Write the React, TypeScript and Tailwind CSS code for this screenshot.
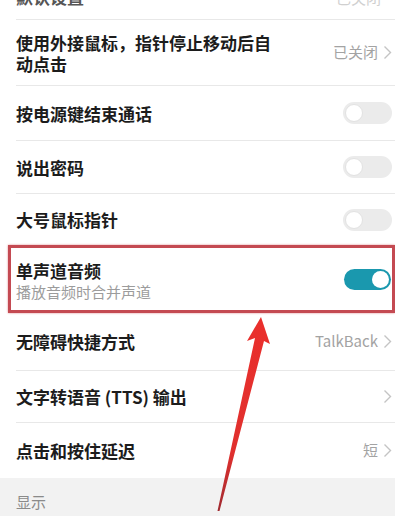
import * as React from "react";

const font = { fontFamily: '"Noto Sans CJK SC", "Noto Sans", sans-serif' };

function Chevron() {
  return (
    <svg width="9" height="15" viewBox="0 0 9 15" className="ml-[5px]">
      <polyline points="1.5,1.5 7.5,7.5 1.5,13.5" fill="none" stroke="#c4c4c4" strokeWidth="1.4" />
    </svg>
  );
}

function Toggle({ on }: { on?: boolean }) {
  if (on) {
    return (
      <div className="w-[47px] h-[21px] rounded-full bg-[#1a98ae] flex items-center justify-end pr-[2px]">
        <div className="w-[17px] h-[17px] rounded-full bg-white" />
      </div>
    );
  }
  return (
    <div className="w-[49px] h-[22px] rounded-full bg-[#ebebeb] flex items-center pl-[2px]">
      <div className="w-[18px] h-[18px] rounded-full bg-white border border-[#e2e2e2]" />
    </div>
  );
}

function Divider() {
  return <div className="h-px ml-4 bg-[#e8e8e8]" />;
}

function Row({ h, title, right }: { h: string; title: React.ReactNode; right?: React.ReactNode }) {
  return (
    <div className={`${h} flex items-center justify-between pl-4 pr-[3px]`}>
      <div className="text-[17px] leading-[21px] font-semibold text-[#1c1c1c]">{title}</div>
      {right}
    </div>
  );
}

function Value({ text }: { text?: string }) {
  return (
    <div className="flex items-center text-[15px] text-[#a3a3a3]">
      {text && <span>{text}</span>}
      <Chevron />
    </div>
  );
}

export default function App() {
  return (
    <div className="relative w-full h-[516px] overflow-hidden bg-white" style={font}>
      <div className="h-[19px] overflow-hidden flex items-end justify-between pl-4 pr-[14px]">
        <div className="text-[17px] leading-[21px] font-semibold text-[#555] mb-[12px]">默认设置</div>
        <div className="text-[15px] leading-[21px] text-[#d0d0d0] mb-[11px]">已关闭</div>
      </div>
      <Divider />
      <Row
        h="h-[65px]"
        title={<div className="w-[262px]">使用外接鼠标，指针停止移动后自动点击</div>}
        right={<Value text="已关闭" />}
      />
      <Divider />
      <Row h="h-[54px]" title="按电源键结束通话" right={<Toggle />} />
      <Divider />
      <Row h="h-[52px]" title="说出密码" right={<Toggle />} />
      <Divider />
      <Row h="h-[51px]" title="大号鼠标指针" right={<Toggle />} />
      <div className="h-[68px] ml-[8px] border-[3px] border-[#c44a52] shadow-[0_0_2px_#e08a90] flex items-center justify-between pl-[5px] pr-[1px]">
        <div className="pt-[4px]">
          <div className="text-[17px] leading-[21px] font-semibold text-[#1c1c1c]">单声道音频</div>
          <div className="text-[15px] leading-[21px] text-[#9c9c9c]">播放音频时合并声道</div>
        </div>
        <Toggle on />
      </div>
      <Row h="h-[57px]" title="无障碍快捷方式" right={<Value text="TalkBack" />} />
      <Divider />
      <Row h="h-[51px]" title="文字转语音 (TTS) 输出" right={<Value />} />
      <Divider />
      <Row h="h-[55px]" title="点击和按住延迟" right={<Value text="短" />} />
      <div className="h-[48px] bg-[#f2f2f2] flex items-center pl-4 text-[15px] text-[#8a8a8a]">显示</div>

      <svg className="absolute left-0 top-0 pointer-events-none" width="395" height="516" viewBox="0 0 395 516">
        <defs>
          <linearGradient id="arr" x1="0" y1="0" x2="0" y2="1">
            <stop offset="0" stopColor="#ea2f2c" />
            <stop offset="0.7" stopColor="#e0302e" />
            <stop offset="1" stopColor="#a02a30" />
          </linearGradient>
        </defs>
        <polygon
          points="261,317 270,344 264,341 219.5,511 217.5,511 255,338 247,341"
          fill="url(#arr)"
        />
      </svg>
    </div>
  );
}
